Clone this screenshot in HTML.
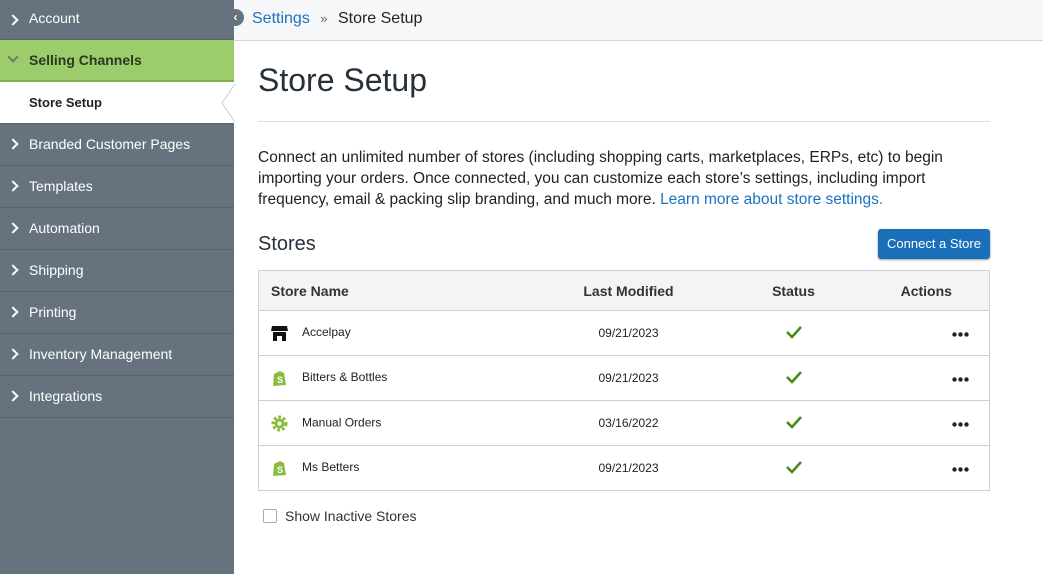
<!DOCTYPE html>
<html><head><style>
*{box-sizing:border-box;margin:0;padding:0}
body{width:1043px;height:574px;overflow:hidden;font-family:"Liberation Sans",Arial,sans-serif;background:#fff;position:relative;color:#222}
.sb{position:absolute;left:0;top:0;width:234px;height:574px;background:#66737f}
.it{height:42px;border-bottom:1px solid #56626d;color:#fff;font-size:14px;line-height:41px;padding-left:29px;position:relative}
.it:before{content:"";position:absolute;left:9px;top:16px;width:6px;height:6px;border-right:2px solid #fff;border-top:2px solid #fff;transform:rotate(45deg)}
.sel{background:#9ccc6b;color:#2a3a20;font-weight:bold;border-bottom:2px solid #7fae4e}
.sel:before{border-color:#6b7d5c;transform:rotate(135deg);top:13px}
.sub{background:#fff;color:#222;font-weight:bold;font-size:13px;border-bottom:1px solid #56626d}
.sub:before{display:none}
.top{position:absolute;left:234px;top:0;right:0;height:41px;background:#f5f7f9;border-bottom:1px solid #cfd6dd;font-size:16px;line-height:37px;padding-left:18px;color:#222}
.top a{color:#1a73c2;text-decoration:none}
h1{position:absolute;left:258px;top:62px;font-weight:normal;font-size:32px;color:#26313b}
.hr{position:absolute;left:258px;top:121px;width:732px;border-top:1px solid #dde2e6}
.p{position:absolute;left:258px;top:147px;width:740px;font-size:15.5px;line-height:21px;color:#222}
.p a{color:#1a73c2;text-decoration:none}
h2{position:absolute;left:258px;top:233px;font-size:20px;font-weight:normal;color:#26313b}
.btn{position:absolute;left:878px;top:229px;width:112px;height:30px;background:#1b6fb8;color:#fff;font-size:13px;text-align:center;line-height:30px;border-radius:3px;box-shadow:0 1px 2px rgba(0,0,0,.4)}
table{position:absolute;left:258px;top:270px;width:732px;border-collapse:collapse;border:1px solid #c8d0d8;font-size:12px}
th{height:40px;background:#f2f4f6;font-size:14px;color:#333;text-align:center;border-bottom:1px solid #c8d0d8}
td{height:45px;border-bottom:1px solid #c8d0d8;text-align:center;color:#222}
.dots{text-align:right;padding-right:20px}
.cb{position:absolute;left:263px;top:509px;width:14px;height:14px;border:1px solid #aaa;border-radius:2px}
.cbl{position:absolute;left:285px;top:508px;font-size:14px;color:#333}
</style></head><body>
<div class="sb">
<div class="it" style="height:40px;line-height:37px">Account</div>
<div class="it sel">Selling Channels</div>
<div class="it sub">Store Setup</div>
<div class="it">Branded Customer Pages</div>
<div class="it">Templates</div>
<div class="it">Automation</div>
<div class="it">Shipping</div>
<div class="it">Printing</div>
<div class="it">Inventory Management</div>
<div class="it">Integrations</div>
</div>
<svg style="position:absolute;left:220px;top:84px" width="16" height="38"><path d="M15 0 L2 19 L15 38" fill="#fff" stroke="#c8d0d8"/></svg>
<div class="top"><a>Settings</a> <span style="font-size:13px;color:#666;margin:0 6px">»</span> Store Setup</div>
<div style="position:absolute;left:227px;top:9px;width:17px;height:17px;border-radius:50%;background:#66737f;color:#fff;font-size:12px;text-align:center;line-height:17px;font-weight:bold">‹</div>
<h1>Store Setup</h1>
<div class="hr"></div>
<div class="p">Connect an unlimited number of stores (including shopping carts, marketplaces, ERPs, etc) to begin importing your orders. Once connected, you can customize each store’s settings, including import frequency, email &amp; packing slip branding, and much more. <a>Learn more about store settings.</a></div>
<h2>Stores</h2>
<div class="btn">Connect a Store</div>
<table>
<tr><th style="text-align:left;padding-left:12px;width:250px">Store Name</th><th style="width:240px">Last Modified</th><th style="width:90px">Status</th><th style="padding-left:25px">Actions</th></tr>
<tr><td style="text-align:left;padding-left:12px"><svg width="17" height="16" style="vertical-align:middle;margin-right:14px"><path d="M1 1h15l1 5H0z M2 7h13v9h-4v-5H6v5H2z" fill="#111"/></svg>Accelpay</td><td>09/21/2023</td><td><svg width="18" height="14"><path d="M2 7 L7 12 L16 2" fill="none" stroke="#4a8a1c" stroke-width="2.6"/></svg></td><td class="dots"><svg width="17" height="5"><circle cx="2.5" cy="2.5" r="2.2" fill="#222"/><circle cx="8.5" cy="2.5" r="2.2" fill="#222"/><circle cx="14.5" cy="2.5" r="2.2" fill="#222"/></svg></td></tr>
<tr><td style="text-align:left;padding-left:12px"><svg width="17" height="16" style="vertical-align:middle;margin-right:14px"><path d="M3 4 L9 1 L13 3 L15 15 L2 16z" fill="#8cbc3f"/><text x="6" y="13" font-size="9" fill="#fff" font-weight="bold">S</text></svg>Bitters &amp; Bottles</td><td>09/21/2023</td><td><svg width="18" height="14"><path d="M2 7 L7 12 L16 2" fill="none" stroke="#4a8a1c" stroke-width="2.6"/></svg></td><td class="dots"><svg width="17" height="5"><circle cx="2.5" cy="2.5" r="2.2" fill="#222"/><circle cx="8.5" cy="2.5" r="2.2" fill="#222"/><circle cx="14.5" cy="2.5" r="2.2" fill="#222"/></svg></td></tr>
<tr><td style="text-align:left;padding-left:12px"><svg width="17" height="17" style="vertical-align:middle;margin-right:14px"><circle cx="8.5" cy="8.5" r="6" fill="none" stroke="#8cbc3f" stroke-width="4" stroke-dasharray="2.5 2"/><circle cx="8.5" cy="8.5" r="5" fill="#8cbc3f"/><circle cx="8.5" cy="8.5" r="2" fill="#fff"/></svg>Manual Orders</td><td>03/16/2022</td><td><svg width="18" height="14"><path d="M2 7 L7 12 L16 2" fill="none" stroke="#4a8a1c" stroke-width="2.6"/></svg></td><td class="dots"><svg width="17" height="5"><circle cx="2.5" cy="2.5" r="2.2" fill="#222"/><circle cx="8.5" cy="2.5" r="2.2" fill="#222"/><circle cx="14.5" cy="2.5" r="2.2" fill="#222"/></svg></td></tr>
<tr><td style="text-align:left;padding-left:12px"><svg width="17" height="16" style="vertical-align:middle;margin-right:14px"><path d="M3 4 L9 1 L13 3 L15 15 L2 16z" fill="#8cbc3f"/><text x="6" y="13" font-size="9" fill="#fff" font-weight="bold">S</text></svg>Ms Betters</td><td>09/21/2023</td><td><svg width="18" height="14"><path d="M2 7 L7 12 L16 2" fill="none" stroke="#4a8a1c" stroke-width="2.6"/></svg></td><td class="dots"><svg width="17" height="5"><circle cx="2.5" cy="2.5" r="2.2" fill="#222"/><circle cx="8.5" cy="2.5" r="2.2" fill="#222"/><circle cx="14.5" cy="2.5" r="2.2" fill="#222"/></svg></td></tr>
</table>
<div class="cb"></div><div class="cbl">Show Inactive Stores</div>
</body></html>
